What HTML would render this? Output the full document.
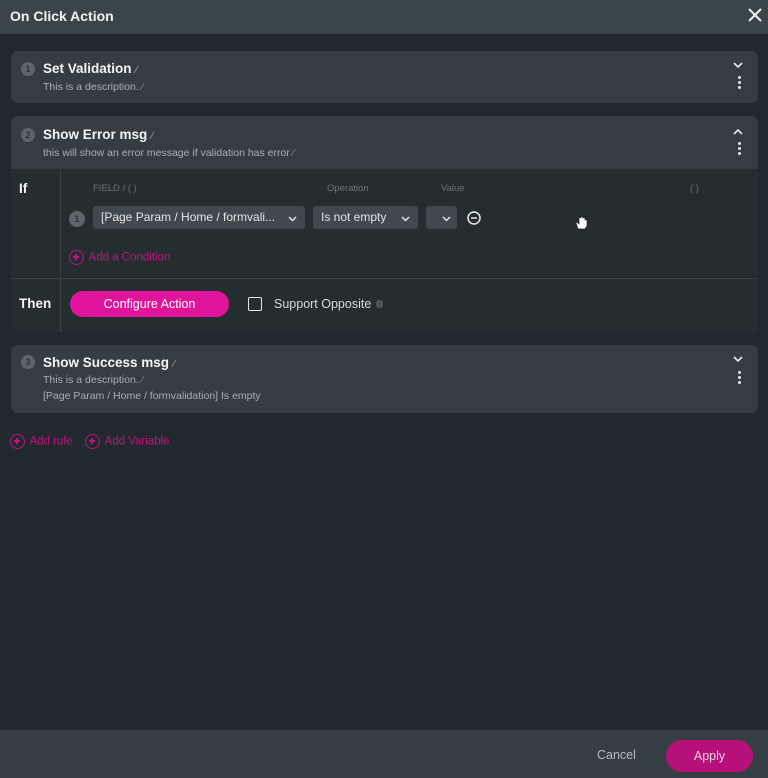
<!DOCTYPE html>
<html><head><meta charset="utf-8"><style>
*{box-sizing:border-box;margin:0;padding:0}
body{width:768px;height:778px;background:#22292e;font-family:"Liberation Sans",sans-serif;position:relative;overflow:hidden;color:#e8ecee}
.abs{position:absolute}
.hdr{left:0;top:0;width:768px;height:34px;background:#3a454a}
.title{left:10px;top:8px;font-size:14px;font-weight:bold;color:#f0f2f3}
.card{background:#353d42;border-radius:7px;left:11px;width:747px}
.num{width:14px;height:14px;border-radius:50%;background:#5c6569;color:#2b3236;font-size:9px;font-weight:bold;text-align:center;line-height:14px}
.h{font-size:13.5px;font-weight:bold;color:#f3f5f6}
.d{font-size:10.5px;color:#a9b0b4}
.pen{color:#8a9296;font-size:10px}
.dots{width:3px}
.dots i{display:block;width:3px;height:3px;border-radius:50%;background:#e6e9ea;margin-bottom:2px}
.sel{background:#41494e;border-radius:3px;height:23px;font-size:12px;color:#e3e6e8;line-height:23px;padding-left:8px}
.lab{font-size:9.5px;color:#6c7478}
.pink{color:#c0137f;font-size:11.5px}
.pc{display:inline-block;width:15px;height:15px;border:1.5px solid #c0137f;border-radius:50%;vertical-align:middle;position:relative;margin-right:2px}
.pc:before{content:"";position:absolute;left:3px;top:5.25px;width:6px;height:1.5px;background:#c0137f}
.pc:after{content:"";position:absolute;left:5.25px;top:3px;width:1.5px;height:6px;background:#c0137f}
</style></head><body>
<div class="abs hdr"></div>
<div class="abs title">On Click Action</div>
<svg class="abs" style="left:748px;top:8px" width="14" height="14" viewBox="0 0 14 14"><path d="M1 1L13 13M13 1L1 13" stroke="#eef0f1" stroke-width="2"/></svg>

<div class="abs card" style="top:51px;height:52px"></div>
<div class="abs num" style="left:21px;top:62px">1</div>
<div class="abs h" style="left:43px;top:61px">Set Validation <span class="pen">⁄</span></div>
<div class="abs d" style="left:43px;top:81px">This is a description. <span class="pen">⁄</span></div>
<svg class="abs" style="left:733px;top:62px" width="10" height="7"><path d="M1 1L5 5L9 1" stroke="#e6e9ea" stroke-width="1.6" fill="none"/></svg>
<div class="abs dots" style="left:738px;top:76px"><i></i><i></i><i></i></div>

<div class="abs card" style="top:116px;height:216px;background:#262d31;overflow:hidden">
<div style="height:53px;background:#353d42"></div>
<div class="abs" style="left:49px;top:53px;width:1px;height:163px;background:#3a4347"></div>
<div class="abs" style="left:0;top:162px;width:747px;height:1px;background:#3a4347"></div>
</div>
<div class="abs num" style="left:21px;top:128px">2</div>
<div class="abs h" style="left:43px;top:127px">Show Error msg <span class="pen">⁄</span></div>
<div class="abs d" style="left:43px;top:147px">this will show an error message if validation has error <span class="pen">⁄</span></div>
<svg class="abs" style="left:733px;top:128px" width="10" height="7"><path d="M1 6L5 2L9 6" stroke="#e6e9ea" stroke-width="1.6" fill="none"/></svg>
<div class="abs dots" style="left:738px;top:142px"><i></i><i></i><i></i></div>

<div class="abs h" style="left:19px;top:181px">If</div>
<div class="abs lab" style="left:93px;top:183px">FIELD / ( )</div>
<div class="abs lab" style="left:327px;top:183px">Operation</div>
<div class="abs lab" style="left:441px;top:183px">Value</div>
<div class="abs lab" style="left:690px;top:183px">( )</div>
<div class="abs num" style="left:69px;top:211px;width:16px;height:16px;line-height:16px">1</div>
<div class="abs sel" style="left:93px;top:206px;width:212px">[Page Param / Home / formvali...</div>
<svg class="abs" style="left:288px;top:216px" width="9" height="6"><path d="M1 1L4.5 4.5L8 1" stroke="#e3e6e8" stroke-width="1.5" fill="none"/></svg>
<div class="abs sel" style="left:313px;top:206px;width:105px">Is not empty</div>
<svg class="abs" style="left:401px;top:216px" width="9" height="6"><path d="M1 1L4.5 4.5L8 1" stroke="#e3e6e8" stroke-width="1.5" fill="none"/></svg>
<div class="abs sel" style="left:426px;top:206px;width:31px"></div>
<svg class="abs" style="left:442px;top:216px" width="9" height="6"><path d="M1 1L4.5 4.5L8 1" stroke="#e3e6e8" stroke-width="1.5" fill="none"/></svg>
<svg class="abs" style="left:466px;top:210px" width="16" height="16"><circle cx="8" cy="8" r="6" stroke="#e6e9ea" stroke-width="1.5" fill="none"/><path d="M5 8H11" stroke="#e6e9ea" stroke-width="1.5"/></svg>
<div class="abs pink" style="left:69px;top:250px"><span class="pc"></span> Add a Condition</div>
<svg class="abs" style="left:575px;top:215px" width="14" height="16" viewBox="0 0 14 16"><path d="M3 14L1 8L2 7L4 9V3Q5 2 6 3V2Q7 1 8 2V3Q9 2 10 3V5Q11 4 12 5V11L10 14Z" fill="#fff" stroke="#222" stroke-width="0.7"/></svg>

<div class="abs h" style="left:19px;top:296px">Then</div>
<div class="abs" style="left:70px;top:291px;width:159px;height:26px;border-radius:13px;background:#e0149a;color:#fff;font-size:12.5px;text-align:center;line-height:26px">Configure Action</div>
<div class="abs" style="left:248px;top:297px;width:14px;height:14px;border:1.5px solid #e6e9ea;border-radius:2px"></div>
<div class="abs" style="left:274px;top:297px;font-size:12.5px;color:#d6dadc">Support Opposite</div>
<div class="abs" style="left:376px;top:300px;width:7px;height:8px;background:#4c5458;border-radius:3px"></div>

<div class="abs card" style="top:345px;height:68px"></div>
<div class="abs num" style="left:21px;top:355px">3</div>
<div class="abs h" style="left:43px;top:355px">Show Success msg <span class="pen">⁄</span></div>
<div class="abs d" style="left:43px;top:374px">This is a description. <span class="pen">⁄</span></div>
<div class="abs d" style="left:43px;top:390px">[Page Param / Home / formvalidation] Is empty</div>
<svg class="abs" style="left:733px;top:356px" width="10" height="7"><path d="M1 1L5 5L9 1" stroke="#e6e9ea" stroke-width="1.6" fill="none"/></svg>
<div class="abs dots" style="left:738px;top:371px"><i></i><i></i><i></i></div>

<div class="abs pink" style="left:10px;top:434px"><span class="pc"></span> Add rule</div>
<div class="abs pink" style="left:85px;top:434px"><span class="pc"></span> Add Variable</div>

<div class="abs" style="left:0;top:730px;width:768px;height:48px;background:#353e42"></div>
<div class="abs" style="left:597px;top:748px;font-size:12.5px;color:#b7bdc0">Cancel</div>
<div class="abs" style="left:666px;top:740px;width:87px;height:32px;border-radius:16px;background:#b8107a;color:#e9d5e3;font-size:12.5px;text-align:center;line-height:32px">Apply</div>
</body></html>
